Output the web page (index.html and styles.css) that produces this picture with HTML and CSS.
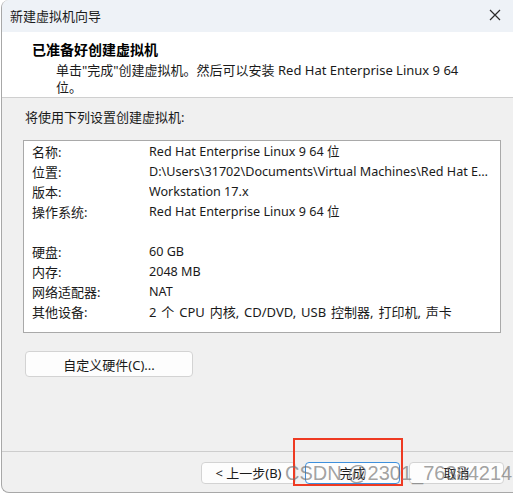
FILE: index.html
```html
<!DOCTYPE html>
<html lang="zh-CN">
<head>
<meta charset="utf-8">
<title>新建虚拟机向导</title>
<link rel="stylesheet" href="styles.css">
</head>
<body>
<div class="window">
  <div class="titlebar">
    <span class="title">新建虚拟机向导</span>
    <svg class="close" width="12" height="12" viewBox="0 0 12 12"><path d="M1 1L11 11M11 1L1 11" stroke="#2b2b2b" stroke-width="1.2" fill="none"/></svg>
  </div>
  <div class="header">
    <div class="heading">已准备好创建虚拟机</div>
    <div class="subtitle">单击"完成"创建虚拟机。然后可以安装 Red Hat Enterprise Linux 9 64<br>位。</div>
  </div>
  <div class="content">
    <div class="intro">将使用下列设置创建虚拟机:</div>
    <div class="summary">
      <div class="row"><span class="label">名称:</span><span class="value">Red Hat Enterprise Linux 9 64 位</span></div>
      <div class="row"><span class="label">位置:</span><span class="value">D:\Users\31702\Documents\Virtual Machines\Red Hat Enterprise Linux 9 64 位</span></div>
      <div class="row"><span class="label">版本:</span><span class="value">Workstation 17.x</span></div>
      <div class="row"><span class="label">操作系统:</span><span class="value">Red Hat Enterprise Linux 9 64 位</span></div>
      <div class="row"></div>
      <div class="row"><span class="label">硬盘:</span><span class="value">60 GB</span></div>
      <div class="row"><span class="label">内存:</span><span class="value">2048 MB</span></div>
      <div class="row"><span class="label">网络适配器:</span><span class="value">NAT</span></div>
      <div class="row"><span class="label">其他设备:</span><span class="value devices">2 个 CPU 内核, CD/DVD, USB 控制器, 打印机, 声卡</span></div>
    </div>
    <button class="btn custom">自定义硬件(C)...</button>
  </div>
  <div class="footer">
    <button class="btn">&lt; 上一步(B)</button>
    <button class="btn primary">完成</button>
    <button class="btn">取消</button>
  </div>
  <div class="highlight"></div>
  <div class="watermark">CSDN @2301_76384214</div>
</div>
</body>
</html>
```
FILE: styles.css
```css
* { box-sizing: border-box; }
html, body {
  margin: 0;
  padding: 0;
  background: #ffffff;
  overflow: hidden;
}
body {
  font-family: "Noto Sans", "Noto Sans CJK SC", sans-serif;
  font-size: 13px;
  color: #1a1a1a;
}
.window {
  position: relative;
  margin-left: 1px;
  width: 512px;
  height: 493px;
  border-left: 1px solid #a8a8a8;
  border-bottom: 1px solid #a8a8a8;
  border-radius: 8px 0 0 8px;
  overflow: hidden;
  display: flex;
  flex-direction: column;
  background: #f0f0f0;
}
.titlebar {
  height: 32px;
  flex: none;
  background: #eef2f7;
  display: flex;
  align-items: center;
  justify-content: space-between;
  padding: 0 12px 1px 8px;
}
.title {
  font-size: 13px;
  color: #1b1b1b;
}
.close { display: block; margin-top: -1px; }
.header {
  flex: none;
  height: 66px;
  background: #ffffff;
  border-bottom: 1px solid #cfcfcf;
  padding: 9px 0 0 30px;
}
.heading {
  font-weight: bold;
  font-size: 14px;
  line-height: 18px;
  color: #000;
}
.subtitle {
  margin-top: 3px;
  padding-left: 24px;
  line-height: 17px;
  color: #1a1a1a;
}
.content {
  flex: 1;
  padding: 10px 12px 0 21px;
  border-bottom: 1px solid #cdcdcd;
}
.intro {
  line-height: 18px;
  padding-left: 2px;
}
.summary {
  margin-top: 14px;
  background: #ffffff;
  border: 1px solid #a9a9a9;
  padding: 1px 8px 10px 8px;
}
.row {
  display: flex;
  height: 20px;
  line-height: 20px;
}
.label {
  flex: none;
  width: 117px;
}
.value {
  flex: 1;
  min-width: 0;
  font-size: 12.6px;
  white-space: nowrap;
  overflow: hidden;
  text-overflow: ellipsis;
}
.devices {
  font-size: 13px;
  word-spacing: 1.5px;
}
.btn {
  font-family: "Noto Sans", "Noto Sans CJK SC", sans-serif;
  font-size: 13px;
  color: #1a1a1a;
  background: #fdfdfd;
  border: 1px solid #d3d3d3;
  border-radius: 4px;
  padding: 0;
}
.custom {
  display: block;
  margin: 18px 0 0 2px;
  width: 168px;
  height: 26px;
}
.footer {
  flex: none;
  height: 40px;
  display: flex;
  justify-content: flex-end;
  gap: 9px;
  padding: 10px 9px 0 0;
}
.footer .btn {
  width: 95px;
  height: 22px;
  line-height: 18px;
}
.footer .primary {
  border-color: #3d8fdc;
}
.highlight {
  position: absolute;
  left: 291px;
  top: 438px;
  width: 110px;
  height: 48px;
  border: 2px solid #ee3a22;
}
.watermark {
  position: absolute;
  left: 283px;
  top: 461px;
  font-family: "Liberation Sans", sans-serif;
  font-size: 20px;
  line-height: 24px;
  color: rgba(110, 110, 110, 0.65);
  white-space: nowrap;
}
```
